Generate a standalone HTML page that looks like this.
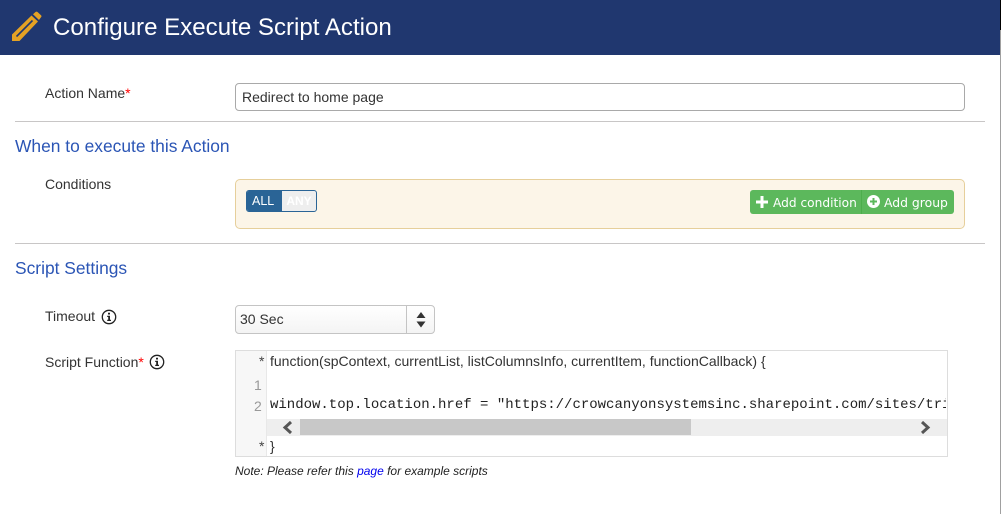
<!DOCTYPE html>
<html><head><meta charset="utf-8">
<style>
html,body{margin:0;padding:0;background:#fff}
body{width:1001px;height:514px;position:relative;overflow:hidden;font-family:"Liberation Sans",sans-serif;font-size:14px;color:#333}
.a{position:absolute;white-space:nowrap}
.r{color:#f00}
.h{color:#2b55b5;font-size:17.4px;line-height:20px}
.hr{position:absolute;left:15px;width:970px;height:1px;background:#c8c6c6}
.mono{font-family:"Liberation Mono",monospace;font-size:14px;color:#222}
.gut{color:#999;font-size:14px}
</style></head><body>
<div class="a" style="left:0;top:0;width:1001px;height:55px;background:#20376f"></div>
<svg class="a" style="left:11px;top:11px" width="32" height="32" viewBox="0 0 32 32">
<path d="M1 30V23.500L20.500 4.500L27 10.500L8.500 30Z" fill="#e5a224"/>
<path d="M22 3.300L24.500 1Q25.500 .2 26.500 1L30 4.300Q31 5.300 30 6.300L28 9Z" fill="#e5a224"/>
<path d="M5.500 25.500L21.500 9.500" stroke="#20376f" stroke-width="1.600"/>
</svg>
<div class="a" style="left:53px;top:13px;font-size:24.1px;line-height:30px;color:#fff">Configure Execute Script Action</div>
<div class="a" style="left:1000px;top:0;width:1px;height:30px;background:#000"></div>
<div class="a" style="left:1000px;top:30px;width:1px;height:484px;background:#a0a0a0"></div>

<div class="a" style="left:45px;top:85px;line-height:16px">Action Name<span class="r">*</span></div>
<div class="a" style="left:235px;top:83px;width:728px;height:26px;border:1px solid #a9a9a9;border-radius:4px;line-height:27px;text-indent:6px;box-sizing:content-box">Redirect to home page</div>
<div class="hr" style="top:121px"></div>
<div class="a h" style="left:15px;top:136px">When to execute this Action</div>

<div class="a" style="left:45px;top:176px;line-height:16px">Conditions</div>
<div class="a" style="left:235px;top:179px;width:728px;height:48px;background:#fcf5e8;border:1px solid #e6cf9b;border-radius:5px"></div>
<div class="a" style="left:246px;top:190px;width:69px;height:20px;border:1px solid #2a6496;border-radius:3px;background:#eee;overflow:hidden">
<div class="a" style="left:0;top:0;width:35px;height:20px;background:#2a6496;color:#fff;font-size:12.5px;line-height:20px;text-indent:5px">ALL</div>
<div class="a" style="left:35px;top:0;width:34px;height:20px;color:#fff;font-size:12px;font-weight:bold;line-height:20px;text-align:center">ANY</div>
</div>
<div class="a" style="left:750px;top:190px;width:204px;height:24px;background:#5cb85c;border-radius:3px"></div>
<div class="a" style="left:861px;top:190px;width:1px;height:24px;background:#4cae4c"></div>
<svg class="a" style="left:756px;top:196px" width="12" height="12" viewBox="0 0 12 12"><path d="M4.500 0H7.500V4.500H12V7.500H7.500V12H4.500V7.500H0V4.500H4.500Z" fill="#fff"/></svg>
<div class="a" style="left:773px;top:195px;font-family:'DejaVu Sans',sans-serif;font-size:12.2px;line-height:17px;color:#fff">Add condition</div>
<svg class="a" style="left:867px;top:195px" width="13" height="13" viewBox="0 0 13 13"><circle cx="6.500" cy="6.500" r="6.500" fill="#fff"/><path d="M5.500 3H7.500V5.500H10V7.500H7.500V10H5.500V7.500H3V5.500H5.500Z" fill="#5cb85c"/></svg>
<div class="a" style="left:884px;top:194px;font-family:'DejaVu Sans',sans-serif;font-size:12.4px;line-height:17px;color:#fff">Add group</div>
<div class="hr" style="top:243px"></div>
<div class="a h" style="left:15px;top:258px">Script Settings</div>

<div class="a" style="left:45px;top:308px;line-height:16px">Timeout</div>
<svg class="a" style="left:101px;top:309px" width="16" height="16" viewBox="0 0 16 16"><circle cx="8" cy="8" r="6.700" fill="none" stroke="#222" stroke-width="1.300"/><path d="M7 3.800H9V5.500H7ZM6.200 6.800H9V10.800H10V12H6.200V10.800H7.200V8H6.200Z" fill="#222"/></svg>
<div class="a" style="left:235px;top:305px;width:198px;height:27px;border:1px solid #c4c4c4;border-radius:4px;background:linear-gradient(#fff,#f4f4f4);line-height:26px;text-indent:4px">30 Sec</div>
<div class="a" style="left:406px;top:306px;width:1px;height:27px;background:#c4c4c4"></div>
<svg class="a" style="left:416px;top:312px" width="10" height="16" viewBox="0 0 10 16"><path d="M5 0L9.500 6H.5ZM.5 9.500H9.500L5 15.500Z" fill="#333"/></svg>

<div class="a" style="left:45px;top:354px;line-height:16px">Script Function<span class="r">*</span></div>
<svg class="a" style="left:149px;top:354px" width="16" height="16" viewBox="0 0 16 16"><circle cx="8" cy="8" r="6.700" fill="none" stroke="#222" stroke-width="1.300"/><path d="M7 3.800H9V5.500H7ZM6.200 6.800H9V10.800H10V12H6.200V10.800H7.200V8H6.200Z" fill="#222"/></svg>

<div class="a" style="left:235px;top:350px;width:711px;height:105px;border:1px solid #ddd;overflow:hidden">
<div class="a" style="left:0;top:0;width:30px;height:105px;background:#f7f7f7;border-right:1px solid #e8e8e8"></div>
<div class="a gut" style="left:23px;top:2px;color:#444;line-height:16px">*</div>
<div class="a gut" style="left:18px;top:26px;line-height:16px">1</div>
<div class="a gut" style="left:18px;top:47px;line-height:16px">2</div>
<div class="a gut" style="left:23px;top:87px;color:#444;line-height:16px">*</div>
<div class="a" style="left:34px;top:2px;line-height:16px">function(spContext, currentList, listColumnsInfo, currentItem, functionCallback) {</div>
<div class="a mono" style="left:34px;top:46px;line-height:16px;width:676px;overflow:hidden">window.top.location.href = "https://crowcanyonsystemsinc.sharepoint.com/sites/trial/Pages/home.aspx";</div>
<div class="a" style="left:31px;top:68px;width:680px;height:17px;background:#eee"></div>
<div class="a" style="left:64px;top:68px;width:391px;height:16px;background:#c8c8c8"></div>
<svg class="a" style="left:46px;top:70px" width="11" height="13" viewBox="0 0 11 13"><path d="M9 1L3 6.500L9 12" fill="none" stroke="#555" stroke-width="3"/></svg>
<svg class="a" style="left:684px;top:70px" width="11" height="13" viewBox="0 0 11 13"><path d="M2 1L8 6.500L2 12" fill="none" stroke="#555" stroke-width="3"/></svg>
<div class="a" style="left:34px;top:87px;line-height:16px">}</div>
</div>
<div class="a" style="left:235px;top:464px;font-size:12px;font-style:italic;line-height:15px;color:#222">Note: Please refer this <span style="color:#00e">page</span> for example scripts</div>
</body></html>
